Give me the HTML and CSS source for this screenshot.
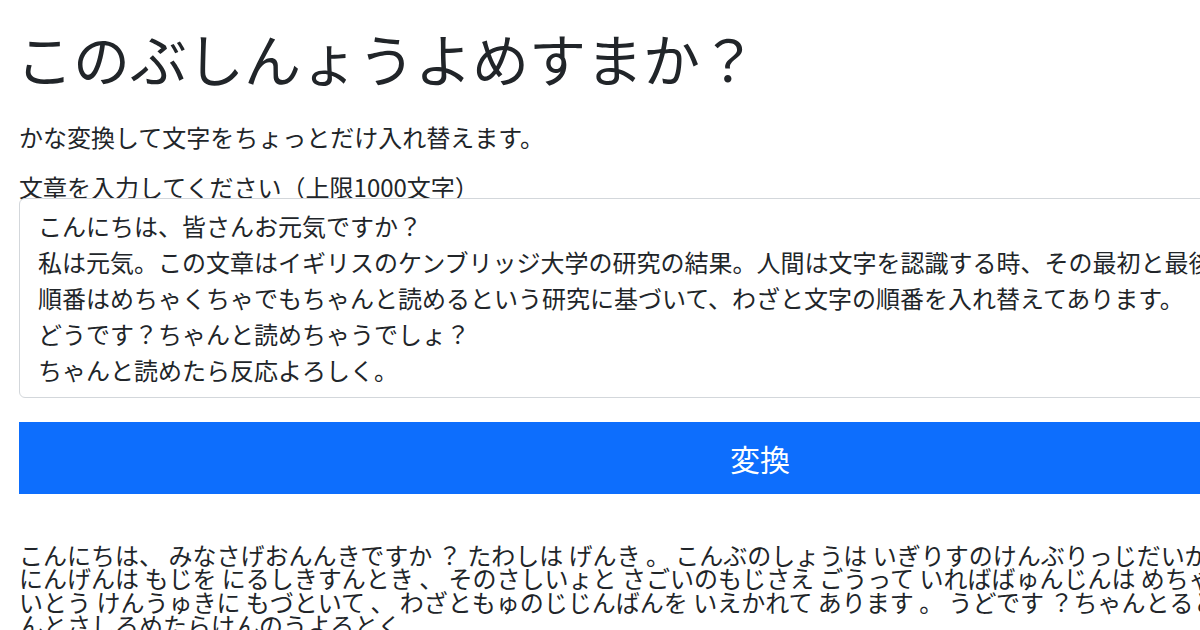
FILE: index.html
```html
<!DOCTYPE html>
<html lang="ja">
<head>
<meta charset="utf-8">
<title>このぶしんょうよめすまか？</title>
<link rel="stylesheet" href="styles.css">
</head>
<body>
<main class="container">
  <h1 class="title">このぶしんょうよめすまか？</h1>
  <p class="lead">かな変換して文字をちょっとだけ入れ替えます。</p>
  <form class="form">
    <label class="label" for="src">文章を入力してください（上限1000文字）</label>
    <textarea id="src" class="input" wrap="off" spellcheck="false">こんにちは、皆さんお元気ですか？
私は元気。この文章はイギリスのケンブリッジ大学の研究の結果。人間は文字を認識する時、その最初と最後の文字さえ合っていれば
順番はめちゃくちゃでもちゃんと読めるという研究に基づいて、わざと文字の順番を入れ替えてあります。
どうです？ちゃんと読めちゃうでしょ？
ちゃんと読めたら反応よろしく。</textarea>
    <button type="button" class="btn">変換</button>
  </form>
  <div class="result">こんにちは、 みなさげおんんきですか ？ たわしは げんき 。 こんぶのしょうは いぎりすのけんぶりっじだいがくの けゅんきうの けっか 。<br>にんげんは もじを にるしきすんとき 、 そのさしいょと さごいのもじさえ ごうって いればばゅんじんは めちゃくちゃでも ちゃんと よめると<br>いとう けんうゅきに もづといて 、 わざともゅのじじんばんを いえかれて あります 。 うどです ？ちゃんとるとよめちゃう でしょ ？ ちゃ<br>んとさしろめたらけんのうよるとく</div>
</main>
</body>
</html>
```

FILE: styles.css
```css
html, body {
  margin: 0;
  padding: 0;
  overflow: hidden;
  background: #ffffff;
}

body {
  font-family: "Noto Sans CJK JP", "Noto Sans", sans-serif;
  font-size: 24px;
  color: #212529;
}

.container {
  width: 1482px;
  padding: 24px 19px 0;
}

.title {
  margin: 0 0 28px;
  font-size: 57px;
  font-weight: 400;
  line-height: 67px;
  text-indent: -3px;
}

.lead {
  margin: 0 0 20px;
  font-size: 24px;
  line-height: 36px;
}

.form {
  display: flex;
  flex-direction: column;
}

.label {
  display: block;
  line-height: 24px;
  margin-bottom: -1px;
}

.input {
  box-sizing: border-box;
  width: 100%;
  height: 200px;
  margin: 0;
  padding: 9px 18px;
  border: 1px solid #d3d7db;
  border-radius: 6px;
  font-family: "Noto Sans CJK JP", "Noto Sans", sans-serif;
  font-size: 24px;
  line-height: 36px;
  color: #212529;
  background: #ffffff;
  resize: none;
  overflow: hidden;
  white-space: pre;
  outline: none;
}

.btn {
  box-sizing: border-box;
  width: 100%;
  height: 72px;
  margin-top: 24px;
  border: none;
  border-radius: 0;
  background: #0d6efd;
  color: #ffffff;
  font-family: "Noto Sans CJK JP", "Noto Sans", sans-serif;
  font-size: 30px;
  line-height: 45px;
  cursor: pointer;
}

.result {
  margin-top: 49px;
  font-size: 24px;
  line-height: 23.3px;
  white-space: nowrap;
}
```
